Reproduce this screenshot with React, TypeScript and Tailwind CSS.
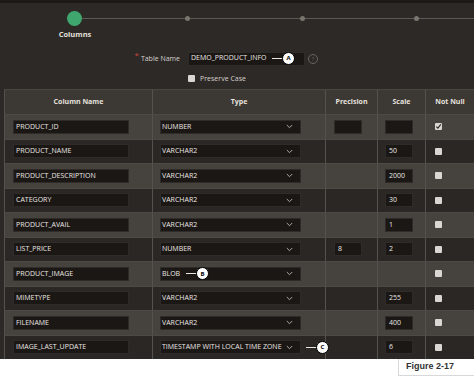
import React from 'react';

type Row = {
  name: string;
  type: string;
  prec?: string;
  scale?: string;
  notNull?: boolean;
  callout?: 'B' | 'C';
};

const rows: Row[] = [
  { name: 'PRODUCT_ID', type: 'NUMBER', prec: '', scale: '', notNull: true },
  { name: 'PRODUCT_NAME', type: 'VARCHAR2', scale: '50' },
  { name: 'PRODUCT_DESCRIPTION', type: 'VARCHAR2', scale: '2000' },
  { name: 'CATEGORY', type: 'VARCHAR2', scale: '30' },
  { name: 'PRODUCT_AVAIL', type: 'VARCHAR2', scale: '1' },
  { name: 'LIST_PRICE', type: 'NUMBER', prec: '8', scale: '2' },
  { name: 'PRODUCT_IMAGE', type: 'BLOB', callout: 'B' },
  { name: 'MIMETYPE', type: 'VARCHAR2', scale: '255' },
  { name: 'FILENAME', type: 'VARCHAR2', scale: '400' },
  { name: 'IMAGE_LAST_UPDATE', type: 'TIMESTAMP WITH LOCAL TIME ZONE', scale: '6', callout: 'C' },
];

function Callout({ letter }: { letter: string }) {
  return (
    <span className="flex items-center">
      <span className="w-[10px] h-px bg-[#e8e6e3]" />
      <span className="w-[13px] h-[13px] rounded-full bg-white border border-black flex items-center justify-center text-[6px] font-bold text-black leading-none">
        {letter}
      </span>
    </span>
  );
}

function Chevron() {
  return (
    <svg width="7" height="5" viewBox="0 0 7 5" className="shrink-0">
      <path d="M0.8 1 L3.5 3.7 L6.2 1" fill="none" stroke="#bdb8b3" strokeWidth="0.9" />
    </svg>
  );
}

function Check({ checked }: { checked?: boolean }) {
  return (
    <span className="w-[7px] h-[7px] bg-[#d9d6d3] rounded-[1px] flex items-center justify-center">
      {checked && (
        <svg width="7" height="7" viewBox="0 0 7 7">
          <path d="M1.3 3.6 L2.9 5.2 L5.8 1.4" fill="none" stroke="#2a2623" strokeWidth="1.1" />
        </svg>
      )}
    </span>
  );
}

const cell = 'flex items-center border-l border-[#56514c]';
const inputBox =
  'bg-[#1b1715] h-[14px] flex items-center whitespace-nowrap text-[#ebe7e3] border border-[#2f2b28]';

export default function App() {
  return (
    <div
      className="w-[474px] h-[380px] bg-white overflow-hidden relative text-[7px]"
      style={{ fontFamily: '"Open Sans", "Noto Sans", sans-serif' }}
    >
      {/* wizard header */}
      <div className="h-[89px] bg-[#2d2926] flex flex-col">
        <div className="h-[3px] bg-[#1c1917]" />
        <div className="mt-[8px] h-[15px] flex items-center pl-[67px]">
          <span className="w-[15px] h-[15px] rounded-full bg-[#3fa66e] shrink-0" />
          <span className="w-[103px] h-px bg-[#5e5954]" />
          <span className="w-[5px] h-[5px] rounded-full bg-[#7a746e] shrink-0" />
          <span className="w-[110px] h-px bg-[#5e5954]" />
          <span className="w-[5px] h-[5px] rounded-full bg-[#7a746e] shrink-0" />
          <span className="w-[109px] h-px bg-[#5e5954]" />
          <span className="w-[5px] h-[5px] rounded-full bg-[#7a746e] shrink-0" />
          <span className="flex-1 h-px bg-[#5e5954]" />
        </div>
        <div className="mt-[3px] h-[10px] flex">
          <span className="ml-[55px] w-[40px] text-center font-bold text-[#e4e0dc] text-[7.5px] leading-[10px]">
            Columns
          </span>
        </div>
        <div className="mt-[13px] h-[13px] flex items-center">
          <div className="w-[180px] flex justify-end items-center text-[#d6d2ce]">
            <span className="text-[#c8473a] text-[8px] leading-none -mt-[7px] mr-[2px]">*</span>
            <span className="leading-none">Table Name</span>
          </div>
          <div className={`${inputBox} ml-[8px] w-[117px] h-[13px] relative pl-[2px]`}>
            DEMO_PRODUCT_INFO
            <span className="absolute left-[83px] top-[-1px]">
              <Callout letter="A" />
            </span>
          </div>
          <span className="ml-[3px] w-[10px] h-[10px] rounded-full border border-[#6a655f] text-[#6a655f] text-[6px] leading-none flex items-center justify-center">
            ?
          </span>
        </div>
        <div className="mt-[8px] h-[10px] flex items-center pl-[188px]">
          <span className="w-[7px] h-[7px] bg-[#d9d6d3] rounded-[1px]" />
          <span className="ml-[5px] text-[#d6d2ce] leading-none">Preserve Case</span>
        </div>
      </div>

      {/* columns grid */}
      <div className="bg-[#2d2926] pl-[4px]">
        <div className="grid grid-cols-[148px_173px_52px_48px_49px] border-t border-[#4a4541]">
          {['Column Name', 'Type', 'Precision', 'Scale', 'Not Null'].map((h) => (
            <div
              key={h}
              className={`${cell} h-[24px] justify-center bg-[#3c3834] font-bold text-[#e6e2de]`}
            >
              {h}
            </div>
          ))}
          {rows.map((r, i) => {
            const bg = i % 2 === 0 ? 'bg-[#46423e]' : 'bg-[#2b2724]';
            const rc = `${cell} ${bg} h-[24.5px] border-t border-t-[#4e4944]`;
            return (
              <React.Fragment key={r.name}>
                <div className={`${rc} pl-[8px]`}>
                  <div className={`${inputBox} w-[116px] pl-[2px]`}>{r.name}</div>
                </div>
                <div className={`${rc} pl-[7px] relative`}>
                  <div className={`${inputBox} w-[141px] pl-[1px] pr-[3px] text-[#cdc9c5]`}>
                    <span>{r.type}</span>
                    {r.type.length > 20 ? (
                      <span className="ml-[4px]"><Chevron /></span>
                    ) : (
                      <span className="ml-auto mr-[4px]"><Chevron /></span>
                    )}
                  </div>
                  {r.callout === 'B' && (
                    <span className="absolute left-[33px] top-[5px] z-10">
                      <Callout letter="B" />
                    </span>
                  )}
                  {r.callout === 'C' && (
                    <span className="absolute left-[153px] top-[5px] z-10">
                      <Callout letter="C" />
                    </span>
                  )}
                </div>
                <div className={`${rc} pl-[8px]`}>
                  {r.prec !== undefined && (
                    <div className={`${inputBox} w-[28px] pl-[3px]`}>{r.prec}</div>
                  )}
                </div>
                <div className={`${rc} pl-[7px]`}>
                  {r.scale !== undefined && (
                    <div className={`${inputBox} w-[28px] pl-[3px]`}>{r.scale}</div>
                  )}
                </div>
                <div className={`${rc} pl-[9px]`}>
                  <Check checked={r.notNull} />
                </div>
              </React.Fragment>
            );
          })}
        </div>
      </div>

      {/* figure caption */}
      <div className="flex justify-end">
        <div
          className="w-[76px] h-[17px] border-l border-b border-[#d8d8d8] flex items-center pl-[7px] text-[9px] font-bold text-[#333]"
          style={{ fontFamily: '"Liberation Sans", Arial, sans-serif' }}
        >
          Figure 2-17
        </div>
      </div>
    </div>
  );
}
